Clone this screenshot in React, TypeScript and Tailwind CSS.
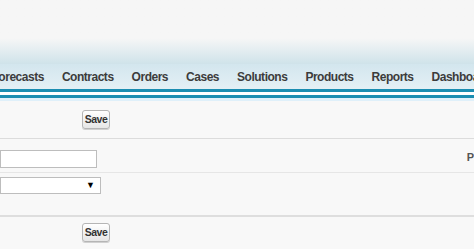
import React from 'react';

const tabs = ['Forecasts', 'Contracts', 'Orders', 'Cases', 'Solutions', 'Products', 'Reports', 'Dashboards'];

const SaveButton: React.FC = () => (
  <button className="block h-[19px] w-[28px] border border-[#b5b5b5] rounded-[3px] bg-gradient-to-b from-white to-[#e6e6e6] text-[10.5px] font-bold tracking-[-0.5px] text-[#333] leading-none shadow-[0_1px_0_#d0d0d0]">
    Save
  </button>
);

const App: React.FC = () => {
  return (
    <div className="w-[474px] h-[249px] overflow-hidden bg-[#f8f8f8] font-['Liberation_Sans',Arial,sans-serif]">
      {/* header */}
      <div className="h-[64px] bg-gradient-to-b from-[#f6f6f6] via-[#f6f6f6] via-60% to-[#cfe3ea]" />
      {/* tab bar */}
      <nav className="h-[25px] pt-[1px] bg-gradient-to-b from-[#d3e6ee] to-[#e4f0f5] flex items-center gap-[18px] -ml-[8.5px] whitespace-nowrap">
        {tabs.map(t => (
          <span key={t} className="text-[12px] font-bold tracking-[-0.48px] text-[#3c3c3c]">{t}</span>
        ))}
      </nav>
      <div className="h-[3px] bg-[#1b8db1]" />
      <div className="h-[3px] bg-white" />
      <div className="h-[3px] bg-[#1b8db1]" />
      <div className="h-[3px] bg-[#dff0fa]" />

      {/* form */}
      <div className="flex flex-col">
        <div className="h-[38px] pt-[9px] pl-[82px] border-b border-[#dcdcdc]">
          <SaveButton />
        </div>
        <div className="h-[34px] pt-[11px] flex items-start justify-between border-b border-[#e6e6e6]">
          <div className="w-[97px] h-[18px] bg-white border border-[#bdbdbd]" />
          <span className="text-[11px] font-bold text-[#555] leading-none mt-[2px]">P</span>
        </div>
        <div className="h-[44px] pt-[4px] border-b-2 border-[#dedede]">
          <div className="w-[101px] h-[17px] bg-white border border-[#bdbdbd] flex items-center justify-end pr-[5px]">
            <span className="text-[9px] text-black leading-none">▼</span>
          </div>
        </div>
        <div className="h-[32px] pt-[6px] pl-[82px]">
          <SaveButton />
        </div>
      </div>
    </div>
  );
};

export default App;
